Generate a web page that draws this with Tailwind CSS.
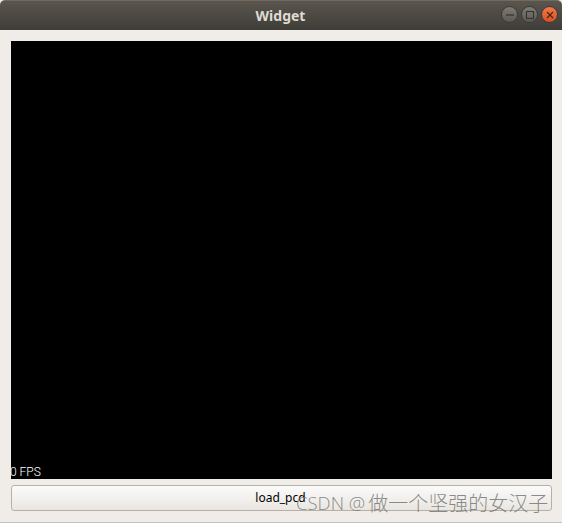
<!DOCTYPE html>
<html lang="en">
<head>
<meta charset="UTF-8" />
<title>Widget</title>
<script src="https://cdn.jsdelivr.net/npm/@tailwindcss/browser@4"></script>
</head>
<body class="w-[562px] h-[523px] overflow-hidden bg-[#f0ede8] font-['Liberation_Sans',sans-serif]">
<div class="relative w-[562px] h-[523px] flex flex-col">
  <!-- Title bar -->
  <header class="h-[30px] shrink-0 flex items-center justify-center relative rounded-t-[5px] bg-gradient-to-b from-[#5a564e] to-[#3f3d38] border-t border-[#6f6b62]">
    <span class="text-[14px] font-bold text-[#dfdbd2] font-['Noto_Sans',sans-serif] -ml-[1px]">Widget</span>
    <div class="absolute right-[4px] top-[5px] flex gap-[3px]">
      <button class="w-[17px] h-[17px] rounded-full bg-gradient-to-b from-[#7f7c76] to-[#5c5954] border border-[#3b3934] flex items-center justify-center">
        <svg width="10" height="10" viewBox="0 0 10 10"><path d="M1 5h8" stroke="#35332f" stroke-width="1.2"/></svg>
      </button>
      <button class="w-[17px] h-[17px] rounded-full bg-gradient-to-b from-[#7f7c76] to-[#5c5954] border border-[#3b3934] flex items-center justify-center">
        <svg width="10" height="10" viewBox="0 0 10 10"><rect x="1.5" y="1.5" width="7" height="7" fill="none" stroke="#35332f" stroke-width="1.1"/></svg>
      </button>
      <button class="w-[17px] h-[17px] rounded-full bg-gradient-to-b from-[#f0794a] to-[#d8501f] border border-[#3b3934] flex items-center justify-center">
        <svg width="10" height="10" viewBox="0 0 10 10"><path d="M2 2l6 6M8 2l-6 6" stroke="#4a2413" stroke-width="1.2"/></svg>
      </button>
    </div>
  </header>

  <!-- Content -->
  <main class="flex-1 flex flex-col gap-[6px] pt-[11px] pl-[11px] pr-[10px]">
    <div class="relative h-[438px] bg-black flex items-end overflow-hidden">
      <span class="text-[12px] leading-[14px] -ml-[1px] text-white font-['Roboto',sans-serif] font-light">0 FPS</span>
    </div>
    <button class="h-[26px] rounded-[3px] border border-[#b5b1aa] bg-gradient-to-b from-[#fbfbfa] to-[#e9e6e1] text-[12px] text-black font-['Noto_Sans',sans-serif] flex items-center justify-center pb-[1px] pr-[2px]">load_pcd</button>
  </main>
  <div class="h-px bg-[#c4c2be]"></div>

  <!-- Watermark -->
  <div class="absolute left-[296px] top-[490px] h-[26px] flex items-center gap-[3px] text-[#6e6e6e]/80 whitespace-nowrap">
    <span class="text-[18.5px] font-['Open_Sans',sans-serif] font-light">CSDN @</span>
    <span class="text-[20px] font-['Noto_Sans_CJK_SC',sans-serif] font-light">做一个坚强的女汉子</span>
  </div>
</div>
</body>
</html>
